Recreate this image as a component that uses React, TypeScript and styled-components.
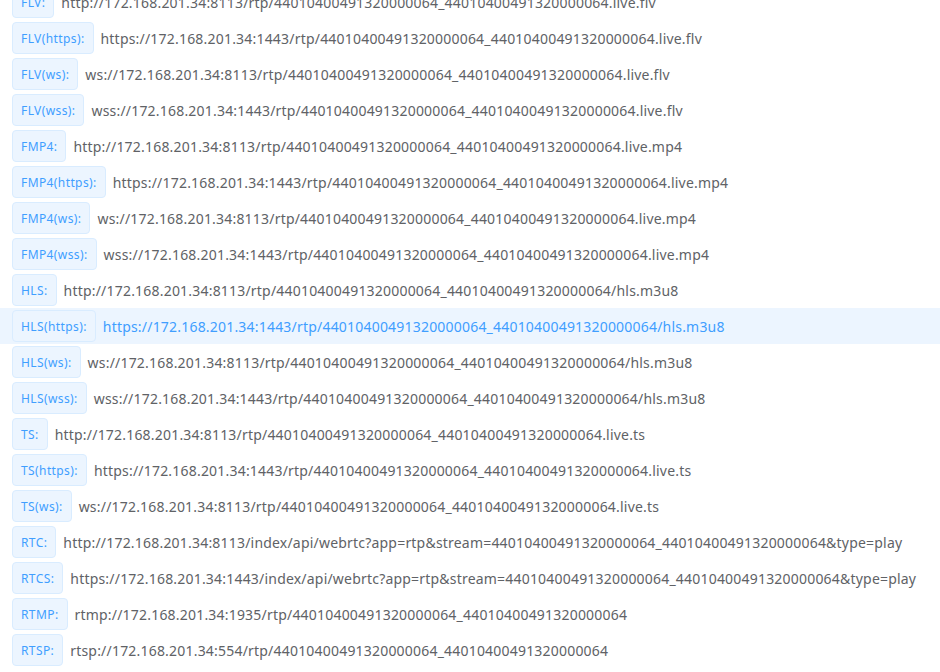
import React from "react";
import styled, { createGlobalStyle } from "styled-components";

const GlobalStyle = createGlobalStyle`
  html, body { margin: 0; padding: 0; background: #ffffff; overflow: hidden; }
  body { font-family: "Noto Sans", "Liberation Sans", sans-serif; }
`;

const List = styled.div`
  display: flex;
  flex-direction: column;
  margin-top: -16px;
`;

const Row = styled.div<{ $active?: boolean }>`
  display: flex;
  align-items: center;
  height: 36px;
  padding: 0 12px;
  background: ${(p) => (p.$active ? "#ecf5ff" : "transparent")};
`;

const Tag = styled.span`
  display: inline-flex;
  align-items: center;
  box-sizing: border-box;
  height: 32px;
  padding: 0 8px;
  background: #ecf5ff;
  border: 1px solid #d9ecff;
  border-radius: 4px;
  color: #409eff;
  font-size: 12px;
  letter-spacing: 0.4px;
  white-space: nowrap;
  flex-shrink: 0;
`;

const Url = styled.span<{ $active?: boolean }>`
  margin-left: 7px;
  font-size: 14px;
  letter-spacing: 0.2px;
  color: ${(p) => (p.$active ? "#409eff" : "#606266")};
  white-space: nowrap;
`;

const ID = "44010400491320000064_44010400491320000064";
const H = "172.168.201.34";

const rows: { label: string; url: string }[] = [
  { label: "FLV:", url: `http://${H}:8113/rtp/${ID}.live.flv` },
  { label: "FLV(https):", url: `https://${H}:1443/rtp/${ID}.live.flv` },
  { label: "FLV(ws):", url: `ws://${H}:8113/rtp/${ID}.live.flv` },
  { label: "FLV(wss):", url: `wss://${H}:1443/rtp/${ID}.live.flv` },
  { label: "FMP4:", url: `http://${H}:8113/rtp/${ID}.live.mp4` },
  { label: "FMP4(https):", url: `https://${H}:1443/rtp/${ID}.live.mp4` },
  { label: "FMP4(ws):", url: `ws://${H}:8113/rtp/${ID}.live.mp4` },
  { label: "FMP4(wss):", url: `wss://${H}:1443/rtp/${ID}.live.mp4` },
  { label: "HLS:", url: `http://${H}:8113/rtp/${ID}/hls.m3u8` },
  { label: "HLS(https):", url: `https://${H}:1443/rtp/${ID}/hls.m3u8` },
  { label: "HLS(ws):", url: `ws://${H}:8113/rtp/${ID}/hls.m3u8` },
  { label: "HLS(wss):", url: `wss://${H}:1443/rtp/${ID}/hls.m3u8` },
  { label: "TS:", url: `http://${H}:8113/rtp/${ID}.live.ts` },
  { label: "TS(https):", url: `https://${H}:1443/rtp/${ID}.live.ts` },
  { label: "TS(ws):", url: `ws://${H}:8113/rtp/${ID}.live.ts` },
  { label: "RTC:", url: `http://${H}:8113/index/api/webrtc?app=rtp&stream=${ID}&type=play` },
  { label: "RTCS:", url: `https://${H}:1443/index/api/webrtc?app=rtp&stream=${ID}&type=play` },
  { label: "RTMP:", url: `rtmp://${H}:1935/rtp/${ID}` },
  { label: "RTSP:", url: `rtsp://${H}:554/rtp/${ID}` },
];

export default function App() {
  return (
    <>
      <GlobalStyle />
      <List>
        {rows.map((r, i) => {
          const active = r.label === "HLS(https):";
          return (
            <Row key={i} $active={active}>
              <Tag>{r.label}</Tag>
              <Url $active={active}>{r.url}</Url>
            </Row>
          );
        })}
      </List>
    </>
  );
}
